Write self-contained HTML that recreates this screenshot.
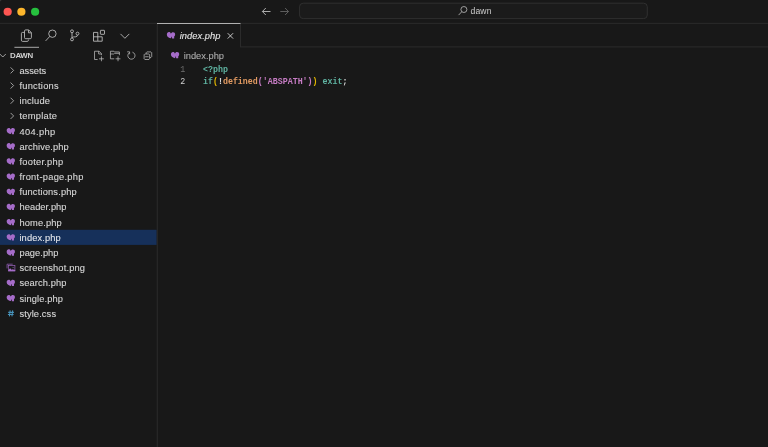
<!DOCTYPE html>
<html lang="en"><head><meta charset="utf-8"><title>index.php — dawn</title>
<style>
html,body{margin:0;padding:0;background:#181818;}
body{width:768px;height:447px;position:relative;overflow:hidden;font-family:"Liberation Sans",sans-serif;color:#ccc;}
#root{position:absolute;left:0;top:0;width:768px;height:447px;will-change:transform;}
.abs{position:absolute;}
#icons{position:absolute;left:0;top:0;}
.row{position:absolute;left:0;width:157px;height:15.18px;line-height:15.18px;}
.lbl{position:absolute;left:19.45px;top:1px;font-size:9.3px;color:#d6d6d6;white-space:nowrap;letter-spacing:0.12px;-webkit-text-stroke:0.12px #d6d6d6;}
.sel .lbl{color:#e4e8f0;}
.mono{font-family:"Liberation Mono",monospace;font-size:8.3px;white-space:pre;}
</style></head><body><div id="root">
<svg id="icons" width="768" height="447" viewBox="0 0 768 447">
<rect x="0" y="229.8" width="156.7" height="15.1" fill="#16305a"/>
<g transform="translate(9.30 66.39)"><path fill="none" stroke="#c2c2c2" stroke-width="0.8" d="M1.3 1L4.3 4L1.3 7"/></g>
<g transform="translate(9.30 81.57)"><path fill="none" stroke="#c2c2c2" stroke-width="0.8" d="M1.3 1L4.3 4L1.3 7"/></g>
<g transform="translate(9.30 96.75)"><path fill="none" stroke="#c2c2c2" stroke-width="0.8" d="M1.3 1L4.3 4L1.3 7"/></g>
<g transform="translate(9.30 111.93)"><path fill="none" stroke="#c2c2c2" stroke-width="0.8" d="M1.3 1L4.3 4L1.3 7"/></g>
<g transform="translate(6.55 127.81)"><path fill="#a56cc9" d="M2.2 0.1C3.2 0.1 3.9 0.7 4.15 1.8C4.4 0.7 5.3 0.2 6.3 0.2C7.6 0.2 8.4 1.1 8.4 2.4C8.4 3.3 8.0 3.9 7.5 4.3L7.4 6.4H5.3L5.2 4.7H4.7L4.3 6.3C2.5 6.1 0.1 5.0 0.1 2.7C0.1 1.1 1.0 0.1 2.2 0.1Z"/></g>
<g transform="translate(6.55 142.99)"><path fill="#a56cc9" d="M2.2 0.1C3.2 0.1 3.9 0.7 4.15 1.8C4.4 0.7 5.3 0.2 6.3 0.2C7.6 0.2 8.4 1.1 8.4 2.4C8.4 3.3 8.0 3.9 7.5 4.3L7.4 6.4H5.3L5.2 4.7H4.7L4.3 6.3C2.5 6.1 0.1 5.0 0.1 2.7C0.1 1.1 1.0 0.1 2.2 0.1Z"/></g>
<g transform="translate(6.55 158.17)"><path fill="#a56cc9" d="M2.2 0.1C3.2 0.1 3.9 0.7 4.15 1.8C4.4 0.7 5.3 0.2 6.3 0.2C7.6 0.2 8.4 1.1 8.4 2.4C8.4 3.3 8.0 3.9 7.5 4.3L7.4 6.4H5.3L5.2 4.7H4.7L4.3 6.3C2.5 6.1 0.1 5.0 0.1 2.7C0.1 1.1 1.0 0.1 2.2 0.1Z"/></g>
<g transform="translate(6.55 173.35)"><path fill="#a56cc9" d="M2.2 0.1C3.2 0.1 3.9 0.7 4.15 1.8C4.4 0.7 5.3 0.2 6.3 0.2C7.6 0.2 8.4 1.1 8.4 2.4C8.4 3.3 8.0 3.9 7.5 4.3L7.4 6.4H5.3L5.2 4.7H4.7L4.3 6.3C2.5 6.1 0.1 5.0 0.1 2.7C0.1 1.1 1.0 0.1 2.2 0.1Z"/></g>
<g transform="translate(6.55 188.53)"><path fill="#a56cc9" d="M2.2 0.1C3.2 0.1 3.9 0.7 4.15 1.8C4.4 0.7 5.3 0.2 6.3 0.2C7.6 0.2 8.4 1.1 8.4 2.4C8.4 3.3 8.0 3.9 7.5 4.3L7.4 6.4H5.3L5.2 4.7H4.7L4.3 6.3C2.5 6.1 0.1 5.0 0.1 2.7C0.1 1.1 1.0 0.1 2.2 0.1Z"/></g>
<g transform="translate(6.55 203.71)"><path fill="#a56cc9" d="M2.2 0.1C3.2 0.1 3.9 0.7 4.15 1.8C4.4 0.7 5.3 0.2 6.3 0.2C7.6 0.2 8.4 1.1 8.4 2.4C8.4 3.3 8.0 3.9 7.5 4.3L7.4 6.4H5.3L5.2 4.7H4.7L4.3 6.3C2.5 6.1 0.1 5.0 0.1 2.7C0.1 1.1 1.0 0.1 2.2 0.1Z"/></g>
<g transform="translate(6.55 218.89)"><path fill="#a56cc9" d="M2.2 0.1C3.2 0.1 3.9 0.7 4.15 1.8C4.4 0.7 5.3 0.2 6.3 0.2C7.6 0.2 8.4 1.1 8.4 2.4C8.4 3.3 8.0 3.9 7.5 4.3L7.4 6.4H5.3L5.2 4.7H4.7L4.3 6.3C2.5 6.1 0.1 5.0 0.1 2.7C0.1 1.1 1.0 0.1 2.2 0.1Z"/></g>
<g transform="translate(6.55 234.07)"><path fill="#a56cc9" d="M2.2 0.1C3.2 0.1 3.9 0.7 4.15 1.8C4.4 0.7 5.3 0.2 6.3 0.2C7.6 0.2 8.4 1.1 8.4 2.4C8.4 3.3 8.0 3.9 7.5 4.3L7.4 6.4H5.3L5.2 4.7H4.7L4.3 6.3C2.5 6.1 0.1 5.0 0.1 2.7C0.1 1.1 1.0 0.1 2.2 0.1Z"/></g>
<g transform="translate(6.55 249.25)"><path fill="#a56cc9" d="M2.2 0.1C3.2 0.1 3.9 0.7 4.15 1.8C4.4 0.7 5.3 0.2 6.3 0.2C7.6 0.2 8.4 1.1 8.4 2.4C8.4 3.3 8.0 3.9 7.5 4.3L7.4 6.4H5.3L5.2 4.7H4.7L4.3 6.3C2.5 6.1 0.1 5.0 0.1 2.7C0.1 1.1 1.0 0.1 2.2 0.1Z"/></g>
<g transform="translate(6.60 263.73)"><path fill="none" stroke="#8b5bae" stroke-width="0.8" d="M0.45 4.7V0.45H6.1"/><rect x="1.95" y="1.85" width="6.35" height="5.3" fill="none" stroke="#9a64bc" stroke-width="0.7"/><path fill="#a56cc9" d="M1.7 7.5V6.3L3.6 4.4L5 6L5.9 5.6L8.6 6.3V7.5Z"/><circle cx="6.5" cy="3.7" r="0.55" fill="#8d5cb0"/></g>
<g transform="translate(6.55 279.61)"><path fill="#a56cc9" d="M2.2 0.1C3.2 0.1 3.9 0.7 4.15 1.8C4.4 0.7 5.3 0.2 6.3 0.2C7.6 0.2 8.4 1.1 8.4 2.4C8.4 3.3 8.0 3.9 7.5 4.3L7.4 6.4H5.3L5.2 4.7H4.7L4.3 6.3C2.5 6.1 0.1 5.0 0.1 2.7C0.1 1.1 1.0 0.1 2.2 0.1Z"/></g>
<g transform="translate(6.55 294.79)"><path fill="#a56cc9" d="M2.2 0.1C3.2 0.1 3.9 0.7 4.15 1.8C4.4 0.7 5.3 0.2 6.3 0.2C7.6 0.2 8.4 1.1 8.4 2.4C8.4 3.3 8.0 3.9 7.5 4.3L7.4 6.4H5.3L5.2 4.7H4.7L4.3 6.3C2.5 6.1 0.1 5.0 0.1 2.7C0.1 1.1 1.0 0.1 2.2 0.1Z"/></g>
<g transform="translate(7.10 309.27)"><path fill="none" stroke="#4793bb" stroke-width="1.05" d="M3.1 1.1L2.3 7.1M5.6 1.1L4.8 7.1M1.1 3.1H6.8M0.8 5.25H6.5"/></g>
<path d="M0 0H1.6L0 1.6Z" fill="#3a3a3a"/>
<rect x="299.55" y="3.2" width="347.75" height="15.4" rx="3.6" fill="#1b1b1b" stroke="#323232" stroke-width="0.9"/>
<circle cx="7.68" cy="11.75" r="4.1" fill="#fe5652"/><circle cx="21.4" cy="11.75" r="4.1" fill="#fdb62c"/><circle cx="35.1" cy="11.75" r="4.1" fill="#26c03e"/>
<g transform="translate(261.50 7.00)"><path fill="none" stroke="#c8c8c8" stroke-width="0.85" d="M9 4.5H1M4.3 1L0.9 4.5L4.3 8"/></g>
<g transform="translate(279.70 7.00)"><path fill="none" stroke="#6a6a6a" stroke-width="0.85" d="M0.6 4.5H8.7M5.4 1L8.8 4.5L5.4 8"/></g>
<g transform="translate(457.50 5.50)"><circle cx="6.4" cy="4" r="3" fill="none" stroke="#bdbdbd" stroke-width="0.8"/><path stroke="#bdbdbd" stroke-width="0.8" d="M4.3 6.2L1.1 9.6"/></g>
<g transform="translate(20.50 29.00)"><g fill="none" stroke="#c2c2c2" stroke-width="0.85" stroke-linejoin="round"><path d="M4 8.5V2.1Q4 0.9 5.2 0.9H8.2L10.9 3.6V8.5Q10.9 9.7 9.7 9.7H5.2Q4 9.7 4 8.5Z"/><path d="M8 1.1V3.8H10.7"/><path d="M3.8 3.4H2.1Q0.9 3.4 0.9 4.6V11.2Q0.9 12.4 2.1 12.4H6.7Q7.9 12.4 7.9 11.2V10.6"/></g></g>
<g transform="translate(45.00 29.00)"><circle cx="7.4" cy="4.7" r="3.7" fill="none" stroke="#c2c2c2" stroke-width="0.85"/><path stroke="#c2c2c2" stroke-width="0.85" d="M4.8 7.4L0.6 11.9"/></g>
<g transform="translate(69.50 28.50)"><g fill="none" stroke="#c2c2c2" stroke-width="0.85"><circle cx="2.5" cy="2.8" r="1.45"/><circle cx="2.5" cy="10.9" r="1.45"/><circle cx="8.0" cy="5.1" r="1.45"/><path d="M2.5 4.25V9.45M8 6.55Q8 8.3 5.8 8.4H4.2Q2.8 8.5 2.55 9.45"/></g></g>
<g transform="translate(92.50 29.00)"><g fill="none" stroke="#c2c2c2" stroke-width="0.85" stroke-linejoin="round"><path d="M1 3.4H5.3V12.2H1ZM1 7.8H9.7V12.2H5.3"/><rect x="7.9" y="1.3" width="4.1" height="4.0" rx="0.4"/></g></g>
<g transform="translate(119.50 33.00)"><path fill="none" stroke="#c2c2c2" stroke-width="0.85" d="M1 0.9L5.4 5.3L9.8 0.9"/></g>
<g transform="translate(-0.60 53.20)"><path fill="none" stroke="#c2c2c2" stroke-width="0.8" d="M0.4 0.8L3.4 3.8L6.4 0.8"/></g>
<g transform="translate(92.80 50.20) scale(0.69)"><g fill="none" stroke="#c2c2c2" stroke-width="1.05"><path d="M7 13.5H2.5V1.5H9.2L12.5 4.9V7.2M8.5 1.5V5.5H12.5"/><path d="M12.5 9V16M9 12.5H16"/></g></g>
<g transform="translate(109.40 50.20) scale(0.69)"><g fill="none" stroke="#c2c2c2" stroke-width="1.05"><path d="M7 12.5H1.5V1.5H6.5L7.5 2.5H14.5V7.2M1.5 5.5H6.3L7.4 4.5H14.5"/><path d="M12.5 9V16M9 12.5H16"/></g></g>
<g transform="translate(125.80 50.10) scale(0.69)"><g fill="none" stroke="#c2c2c2" stroke-width="1.05"><path d="M5.2 3.7A5.2 5.2 0 1 0 9.6 3"/><path d="M2 2.5H5.5V6"/></g></g>
<g transform="translate(142.40 50.20) scale(0.69)"><g fill="none" stroke="#c2c2c2" stroke-width="1.05" stroke-linejoin="round"><path d="M3.5 5.5H9.5L10.5 6.5V12.5L9.5 13.5H3.5L2.5 12.5V6.5Z"/><path d="M5.5 5.3V3.5L6.5 2.5H12.5L13.5 3.5V9.5L12.5 10.5H10.7"/><path d="M4 9.5H9"/></g></g>
<g transform="translate(166.75 32.00)"><path fill="#a56cc9" d="M2.2 0.1C3.2 0.1 3.9 0.7 4.15 1.8C4.4 0.7 5.3 0.2 6.3 0.2C7.6 0.2 8.4 1.1 8.4 2.4C8.4 3.3 8.0 3.9 7.5 4.3L7.4 6.4H5.3L5.2 4.7H4.7L4.3 6.3C2.5 6.1 0.1 5.0 0.1 2.7C0.1 1.1 1.0 0.1 2.2 0.1Z"/></g>
<g transform="translate(227.00 32.50)"><path fill="none" stroke="#cfcfcf" stroke-width="0.95" d="M0.7 0.7L6.1 6.1M6.1 0.7L0.7 6.1"/></g>
<g transform="translate(170.80 51.90)"><path fill="#a56cc9" d="M2.2 0.1C3.2 0.1 3.9 0.7 4.15 1.8C4.4 0.7 5.3 0.2 6.3 0.2C7.6 0.2 8.4 1.1 8.4 2.4C8.4 3.3 8.0 3.9 7.5 4.3L7.4 6.4H5.3L5.2 4.7H4.7L4.3 6.3C2.5 6.1 0.1 5.0 0.1 2.7C0.1 1.1 1.0 0.1 2.2 0.1Z"/></g>
<rect x="0" y="22.85" width="768" height="1" fill="#2b2b2b"/>
<rect x="156.75" y="23.5" width="1" height="424" fill="#2b2b2b"/>
<rect x="240" y="46.4" width="528" height="1" fill="#2b2b2b"/>
<rect x="240" y="24" width="1" height="23" fill="#2b2b2b"/>
<rect x="157" y="23" width="83.5" height="1" fill="#b0b0b0"/>
<rect x="14.4" y="46.8" width="24.6" height="1" fill="#a8a8a8"/>
</svg>
<div class="abs" style="left:470.6px;top:4.6px;font-size:8.6px;line-height:12px;color:#ccc;letter-spacing:0.1px">dawn</div>
<div class="abs" style="left:10px;top:47.7px;line-height:15.18px;font-size:7.9px;font-weight:bold;color:#d0d0d0;letter-spacing:-0.3px">DAWN</div>
<div class="row" style="top:62.80px"><span class="lbl" style="letter-spacing:-0.03px">assets</span></div>
<div class="row" style="top:77.98px"><span class="lbl" style="letter-spacing:0.25px">functions</span></div>
<div class="row" style="top:93.16px"><span class="lbl" style="letter-spacing:0.17px">include</span></div>
<div class="row" style="top:108.34px"><span class="lbl" style="letter-spacing:0.26px">template</span></div>
<div class="row" style="top:123.52px"><span class="lbl" style="letter-spacing:0.37px">404.php</span></div>
<div class="row" style="top:138.70px"><span class="lbl">archive.php</span></div>
<div class="row" style="top:153.88px"><span class="lbl" style="letter-spacing:0.26px">footer.php</span></div>
<div class="row" style="top:169.06px"><span class="lbl" style="letter-spacing:0.27px">front-page.php</span></div>
<div class="row" style="top:184.24px"><span class="lbl" style="letter-spacing:0.17px">functions.php</span></div>
<div class="row" style="top:199.42px"><span class="lbl" style="letter-spacing:0.06px">header.php</span></div>
<div class="row" style="top:214.60px"><span class="lbl">home.php</span></div>
<div class="row sel" style="top:229.78px"><span class="lbl">index.php</span></div>
<div class="row" style="top:244.96px"><span class="lbl" style="letter-spacing:0.04px">page.php</span></div>
<div class="row" style="top:260.14px"><span class="lbl" style="letter-spacing:0.15px">screenshot.png</span></div>
<div class="row" style="top:275.32px"><span class="lbl">search.php</span></div>
<div class="row" style="top:290.50px"><span class="lbl">single.php</span></div>
<div class="row" style="top:305.68px"><span class="lbl">style.css</span></div>
<div class="abs" style="left:179.7px;top:30.3px;line-height:13px;font-size:9.3px;font-style:italic;color:#e8e8e8;letter-spacing:0.05px;-webkit-text-stroke:0.1px #e8e8e8">index.php</div>
<div class="abs" style="left:183.7px;top:50.1px;line-height:13px;font-size:9.3px;color:#acacac;letter-spacing:0px;-webkit-text-stroke:0.1px #acacac">index.php</div>
<div class="abs mono" style="left:180.3px;top:64.2px;line-height:12.4px;color:#6e6e6e">1</div>
<div class="abs mono" style="left:180.3px;top:76.3px;line-height:12.4px;color:#d0d0d0">2</div>
<div class="abs mono" style="left:203px;top:64.2px;line-height:12.4px;font-weight:bold;color:#5fb3a1">&lt;?php</div>
<div class="abs mono" style="left:203px;top:76.3px;line-height:12.4px;font-weight:bold"><span style="color:#5fb3a1">if</span><span style="color:#e0b400">(</span><span style="color:#d6d6d6">!</span><span style="color:#e39b62">defined</span><span style="color:#c77cc4">('ABSPATH')</span><span style="color:#e0b400">)</span> <span style="color:#5fb3a1">exit</span><span style="color:#d6d6d6">;</span></div>
</div></body></html>
